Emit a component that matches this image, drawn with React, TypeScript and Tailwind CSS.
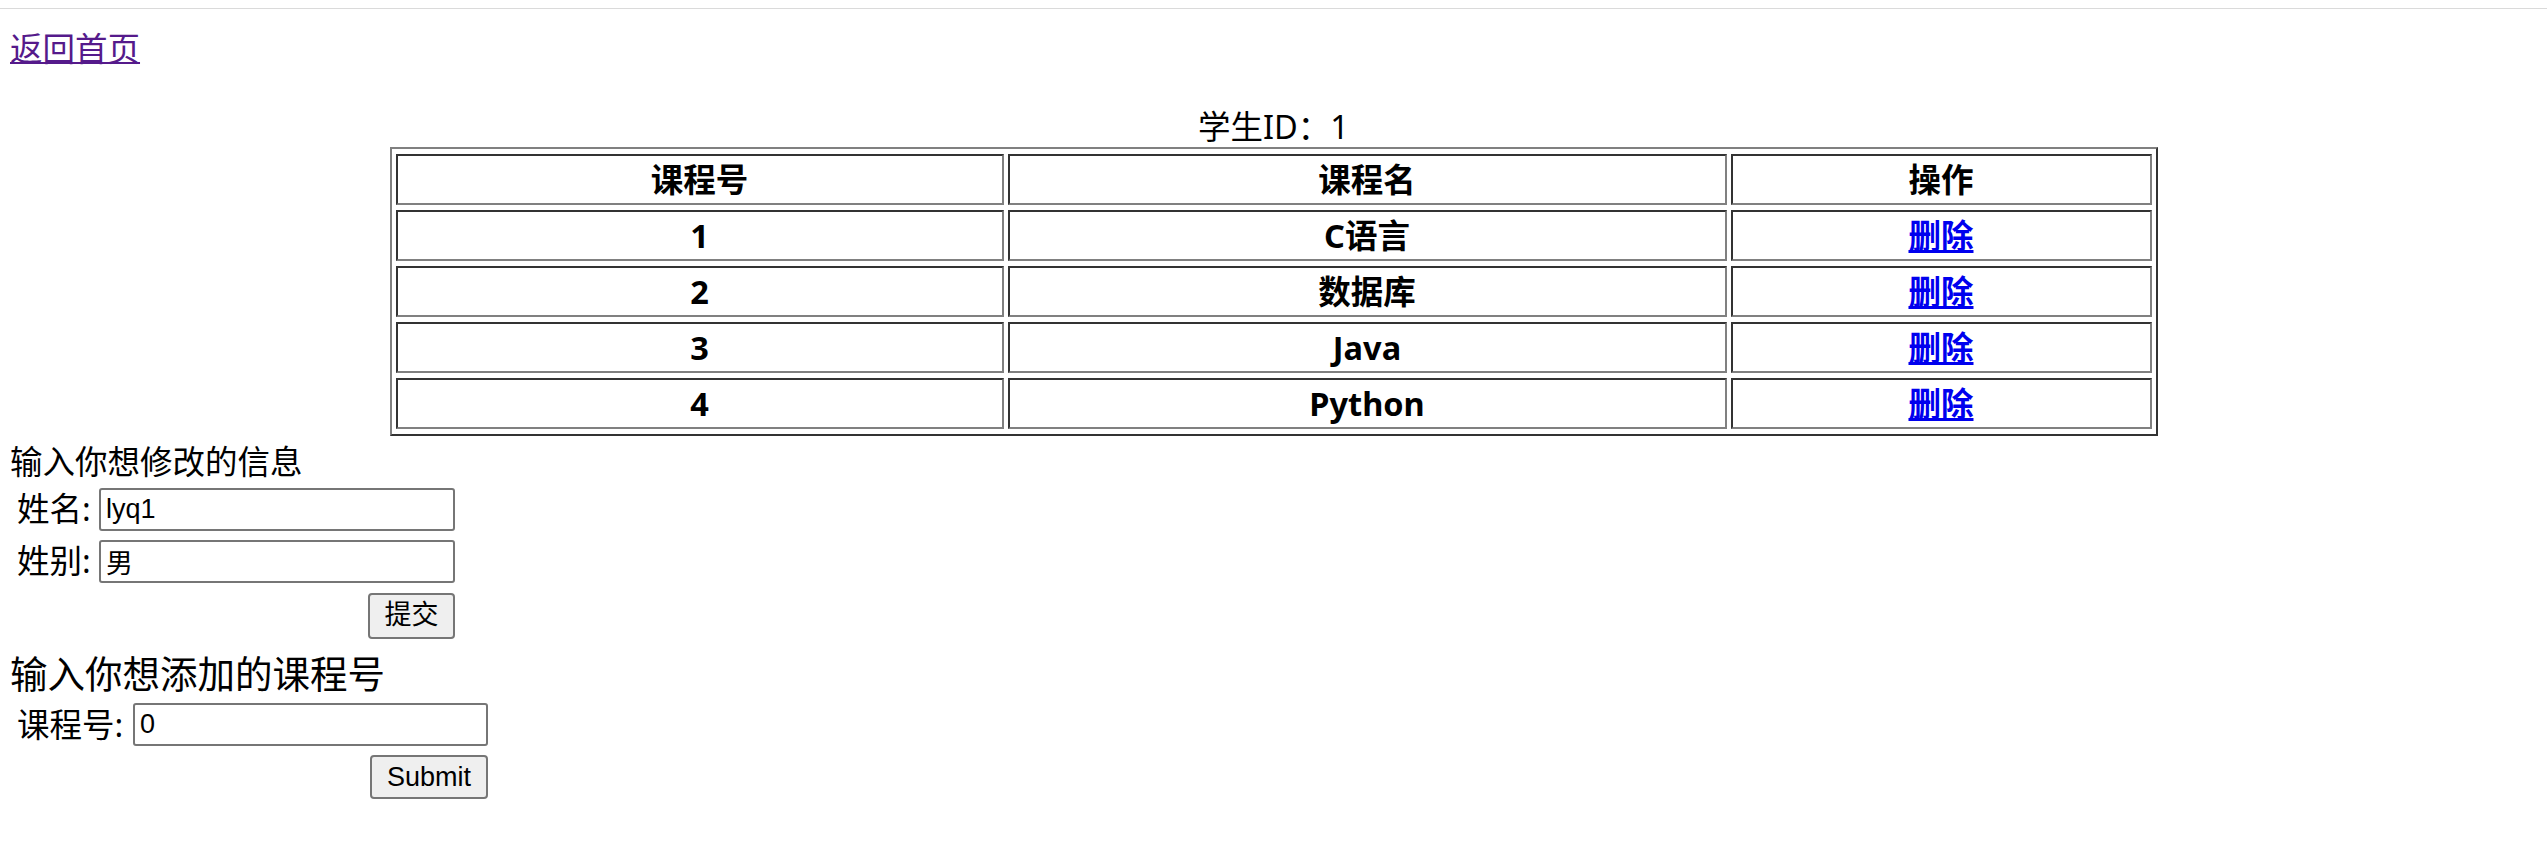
import React from "react";

const COURSES = [
  { id: 1, name: "C语言" },
  { id: 2, name: "数据库" },
  { id: 3, name: "Java" },
  { id: 4, name: "Python" },
];

// inset look of the old border="1" table cells
const CELL =
  "h-[51px] p-0 border-2 border-t-[#333333] border-l-[#333333] border-b-[#808080] border-r-[#808080] text-center align-middle font-bold leading-[40px]";

const FIELD =
  "h-[43px] rounded-[3px] border-2 border-[#767676] bg-white pl-[5px] font-['Liberation_Sans','Noto_Sans_CJK_SC',sans-serif] text-[27px] outline-none";

const BUTTON =
  "rounded-[4px] border-2 border-[#767676] bg-[#efefef] font-['Liberation_Sans','Noto_Sans_CJK_SC',sans-serif] text-[27px] leading-none";

export default function App() {
  return (
    <div className="min-h-screen bg-white text-black font-['Noto_Sans','Noto_Sans_CJK_SC',sans-serif] text-[32.5px]">
      <div className="pt-[8px]">
        <div className="h-px bg-[#dadada]" />
      </div>

      <div className="px-[10px]">
        <div className="mt-[20px] h-[40px] leading-[40px]">
          <a href="#" className="text-[#551a8b] underline decoration-2">
            返回首页
          </a>
        </div>

        {/* 课程表 */}
        <div className="mt-[38px] h-[40px] leading-[40px] text-center">学生ID：1</div>
        <table className="mx-auto w-[1768px] border-separate border-spacing-x-[4px] border-spacing-y-[5px] border-2 border-t-[#808080] border-l-[#808080] border-b-[#333333] border-r-[#333333]">
          <thead>
            <tr>
              <th className={`${CELL} w-[608px]`}>课程号</th>
              <th className={`${CELL} w-[719px]`}>课程名</th>
              <th className={`${CELL} w-[421px]`}>操作</th>
            </tr>
          </thead>
          <tbody>
            {COURSES.map((c) => (
              <tr key={c.id}>
                <td className={CELL}>{c.id}</td>
                <td className={CELL}>{c.name}</td>
                <td className={CELL}>
                  <a href="#" className="text-[#0000ee] underline">
                    删除
                  </a>
                </td>
              </tr>
            ))}
          </tbody>
        </table>

        {/* 修改信息 */}
        <div className="mt-[6px] h-[40px] leading-[40px]">输入你想修改的信息</div>
        <div className="pl-[7px]">
          <div className="mt-[5.5px] flex h-[43px] items-center">
            <span className="w-[82px] leading-[40px]">姓名:</span>
            <input defaultValue="lyq1" className={`${FIELD} w-[356px]`} />
          </div>
          <div className="mt-[9px] flex h-[43px] items-center">
            <span className="w-[82px] leading-[40px]">姓别:</span>
            <input defaultValue="男" className={`${FIELD} w-[356px]`} />
          </div>
          <div className="mt-[10px] flex w-[438px] justify-end">
            <button className={`${BUTTON} h-[46.5px] w-[87px]`}>提交</button>
          </div>
        </div>

        {/* 添加课程 */}
        <div className="mt-[13px] h-[44px] text-[37.5px] leading-[44px]">输入你想添加的课程号</div>
        <div className="pl-[7px]">
          <div className="mt-[7px] flex h-[43px] items-center">
            <span className="w-[116px] leading-[40px]">课程号:</span>
            <input defaultValue="0" className={`${FIELD} w-[355px]`} />
          </div>
          <div className="mt-[9.4px] flex w-[471px] justify-end">
            <button className={`${BUTTON} h-[43.6px] w-[118px]`}>Submit</button>
          </div>
        </div>
      </div>
    </div>
  );
}
